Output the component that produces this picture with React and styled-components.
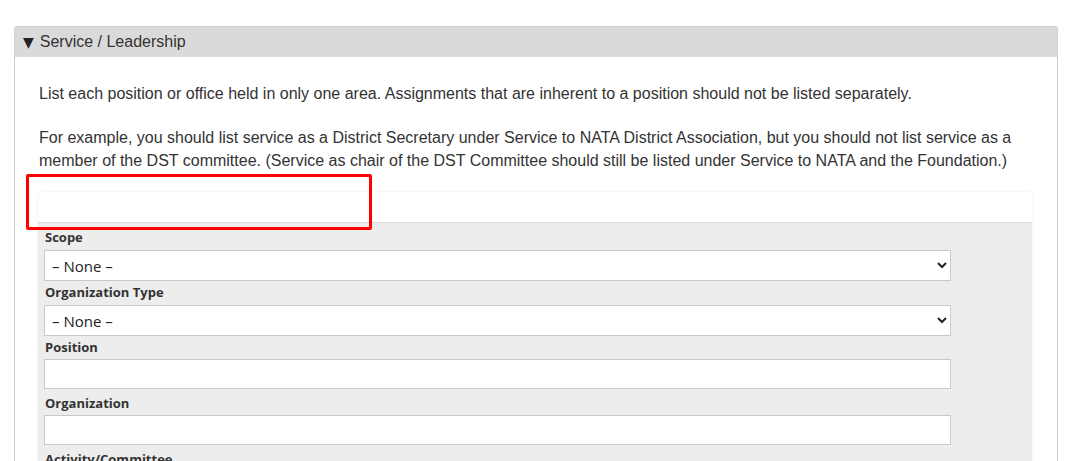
import styled, { createGlobalStyle } from "styled-components";

const GlobalStyle = createGlobalStyle`
  body {
    margin: 0;
    background: #fff;
    font-family: "Liberation Sans", Arial, sans-serif;
    color: #333;
  }
`;

const Page = styled.div`
  padding: 26px 13px 0 14px;
  height: 461px;
  box-sizing: border-box;
  overflow: hidden;
`;

const Panel = styled.details`
  border: 1px solid #cfcfcf;
  border-radius: 3px 3px 0 0;
  border-bottom: none;
`;

const Summary = styled.summary`
  list-style: none;
  display: flex;
  align-items: center;
  gap: 6px;
  height: 30px;
  padding: 0 8px;
  background: #dadada;
  font-size: 16px;
  color: #333;
  cursor: pointer;
  &::-webkit-details-marker {
    display: none;
  }
`;

const Arrow = styled.span`
  font-family: "DejaVu Sans", sans-serif;
  font-size: 14px;
  line-height: 1;
  color: #222;
`;

const Body = styled.div`
  padding: 25px 25px 0 23px;
`;

const Text = styled.p`
  margin: 0 0 ${(p) => (p.$last ? "0" : "21px")} 1px;
  font-size: 16px;
  line-height: 23px;
  color: #333;
`;

const Card = styled.div`
  position: relative;
  margin-top: 20px;
  border-radius: 4px 4px 0 0;
  box-shadow: 0 0 3px rgba(0, 0, 0, 0.08);
`;

const CardHead = styled.div`
  height: 30px;
  background: #fff;
  border-bottom: 1px solid #dcdcdc;
  border-radius: 4px 4px 0 0;
`;

const CardBody = styled.div`
  background: #ededed;
  padding: 3px 0 20px 6px;
`;

const Callout = styled.div`
  position: absolute;
  left: -12px;
  top: -18px;
  width: 346px;
  height: 56px;
  box-sizing: border-box;
  border: 3px solid #ff0000;
  border-radius: 2px;
  pointer-events: none;
`;

const Label = styled.label`
  display: block;
  margin: ${(p) => (p.$wide ? "4px" : "1px")} 0 ${(p) => (p.$select ? "3px" : "2px")} 1px;
  font-family: "Open Sans", sans-serif;
  font-weight: 700;
  font-size: 13px;
  line-height: 20px;
  color: #333;
`;

const Select = styled.select`
  display: block;
  width: 907px;
  height: 31px;
  padding: 0 3px;
  border: 1px solid #c9c9c9;
  border-radius: 0;
  background: #fff;
  font-family: "Open Sans", sans-serif;
  font-size: 15px;
  color: #222;
`;

const Input = styled.input`
  display: block;
  width: 907px;
  height: 30px;
  box-sizing: border-box;
  padding: 0 6px;
  border: 1px solid #c9c9c9;
  border-radius: 0;
  background: #fff;
  font-family: "Open Sans", sans-serif;
  font-size: 14px;
`;

const fields = [
  { label: "Scope", type: "select" },
  { label: "Organization Type", type: "select" },
  { label: "Position", type: "input" },
  { label: "Organization", type: "input", wide: true },
  { label: "Activity/Committee", type: "input", wide: true },
];

export default function App() {
  return (
    <>
      <GlobalStyle />
      <Page>
        <Panel open>
          <Summary>
            <Arrow>▼</Arrow>
            Service / Leadership
          </Summary>
          <Body>
            <Text>
              List each position or office held in only one area. Assignments that are
              inherent to a position should not be listed separately.
            </Text>
            <Text $last>
              For example, you should list service as a District Secretary under Service to
              NATA District Association, but you should not list service as a member of the
              DST committee. (Service as chair of the DST Committee should still be listed
              under Service to NATA and the Foundation.)
            </Text>
            <Card>
              <Callout />
              <CardHead />
              <CardBody>
                {fields.map((f) => (
                  <div key={f.label}>
                    <Label $wide={f.wide} $select={f.type === "select"}>
                      {f.label}
                    </Label>
                    {f.type === "select" ? (
                      <Select defaultValue="">
                        <option value="">– None –</option>
                      </Select>
                    ) : (
                      <Input type="text" />
                    )}
                  </div>
                ))}
              </CardBody>
            </Card>
          </Body>
        </Panel>
      </Page>
    </>
  );
}
